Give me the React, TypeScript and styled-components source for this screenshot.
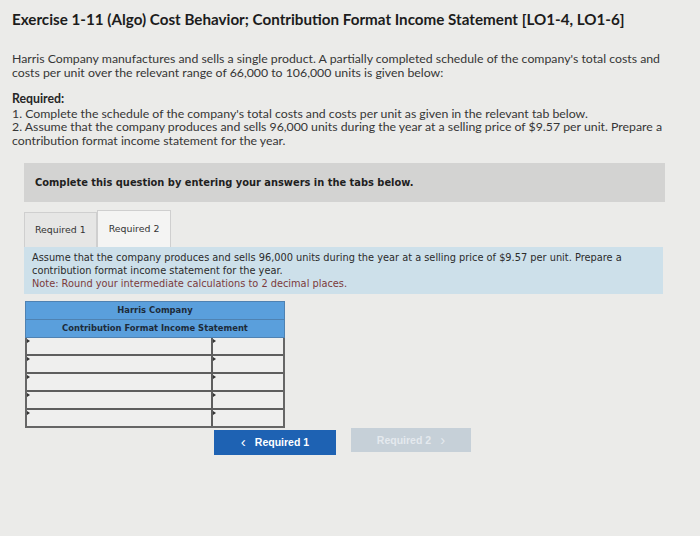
import styled, { createGlobalStyle } from 'styled-components'

const Global = createGlobalStyle`
  html, body {
    margin: 0;
    padding: 0;
    background: #ebebe9;
  }
`

const rows = [0, 1, 2, 3, 4]

const App = () => {
  return (
    <>
      <Global />
      <S.Page>
        <S.Title>
          Exercise 1-11 (Algo) Cost Behavior; Contribution Format Income Statement [LO1-4, LO1-6]
        </S.Title>

        <S.Para>
          Harris Company manufactures and sells a single product. A partially completed schedule of the company's total costs and
          costs per unit over the relevant range of 66,000 to 106,000 units is given below:
        </S.Para>

        <S.Para>
          <S.Strong>Required:</S.Strong>
          1. Complete the schedule of the company's total costs and costs per unit as given in the relevant tab below.
          <br />
          2. Assume that the company produces and sells 96,000 units during the year at a selling price of $9.57 per unit. Prepare a
          contribution format income statement for the year.
        </S.Para>

        <S.Work>
          <S.Banner>Complete this question by entering your answers in the tabs below.</S.Banner>

          <S.Tabs>
            <S.Tab>Required 1</S.Tab>
            <S.Tab $active>Required 2</S.Tab>
          </S.Tabs>

          <S.Info>
            Assume that the company produces and sells 96,000 units during the year at a selling price of $9.57 per unit. Prepare a
            contribution format income statement for the year.
            <S.Note>Note: Round your intermediate calculations to 2 decimal places.</S.Note>
          </S.Info>

          <S.Sheet>
            <S.Head>Harris Company</S.Head>
            <S.Head>Contribution Format Income Statement</S.Head>
            <S.Grid>
              {rows.map(r => (
                <S.Row key={r}>
                  <S.Cell />
                  <S.Cell />
                </S.Row>
              ))}
            </S.Grid>
          </S.Sheet>

          <S.Nav>
            <S.NavButton>
              <S.Chevron>&lsaquo;</S.Chevron> Required 1
            </S.NavButton>
            <S.NavButton $disabled>
              Required 2 <S.Chevron>&rsaquo;</S.Chevron>
            </S.NavButton>
          </S.Nav>
        </S.Work>
      </S.Page>
    </>
  )
}

export default App

const S = {
  Page: styled.div`
    width: 700px;
    height: 536px;
    box-sizing: border-box;
    padding: 10px 12px 0 12px;
    font-family: Lato, 'Open Sans', sans-serif;
    color: #2a2a2a;
    overflow: hidden;
  `,

  Title: styled.h1`
    margin: 0;
    font-size: 15.2px;
    font-weight: 700;
    line-height: 18px;
    color: #1c1c1c;
  `,

  Para: styled.p`
    margin: 24px 0 0 0;
    font-size: 12.3px;
    line-height: 13.6px;
    color: #363636;

    & + & {
      margin-top: 13px;
    }
  `,

  Strong: styled.span`
    display: block;
    margin-bottom: 1px;
    font-weight: 700;
    color: #262626;
  `,

  Work: styled.div`
    margin: 15px 0 0 12px;
    width: 641px;
    font-family: 'DejaVu Sans', Verdana, sans-serif;
  `,

  Banner: styled.div`
    height: 39px;
    display: flex;
    align-items: center;
    padding-left: 11px;
    background: #d3d3d2;
    font-size: 9.9px;
    font-weight: 700;
    color: #1f1f1f;
  `,

  Tabs: styled.div`
    display: flex;
    margin-top: 8px;
    align-items: flex-end;
  `,

  Tab: styled.div<{ $active?: boolean }>`
    box-sizing: border-box;
    height: ${p => (p.$active ? 37 : 35)}px;
    padding: 0 ${p => (p.$active ? 11 : 10)}px;
    display: flex;
    align-items: center;
    border: 1px solid #cfcfcf;
    border-bottom: none;
    background: ${p => (p.$active ? '#f4f4f3' : '#e6e6e5')};
    font-size: 9.4px;
    color: #333;
  `,

  Info: styled.div`
    width: 639px;
    box-sizing: border-box;
    padding: 4px 8px 4px 8px;
    background: #cde0ea;
    font-size: 9.8px;
    line-height: 13px;
    color: #2b2b2b;
  `,

  Note: styled.div`
    color: #7b3a3a;
  `,

  Sheet: styled.div`
    margin-top: 7px;
    margin-left: 1px;
    width: 260px;
  `,

  Head: styled.div`
    height: 17px;
    display: flex;
    align-items: center;
    justify-content: center;
    background: #5a9fdc;
    border: 1px solid #4f82b2;
    border-top: none;
    font-size: 8.4px;
    font-weight: 700;
    color: #1d2b3a;

    &:first-child {
      border-top: 1px solid #4f82b2;
    }
  `,

  Grid: styled.div`
    border: 2px solid #666;
    border-top: none;
    background: #efefee;
  `,

  Row: styled.div`
    display: grid;
    grid-template-columns: 184px 1fr;
    height: 16px;
    border-top: 2px solid #5e5e5e;

    &:first-child {
      border-top: none;
    }
  `,

  Cell: styled.div`
    position: relative;

    & + & {
      border-left: 2px solid #5e5e5e;
    }

    &::before {
      content: '';
      position: absolute;
      left: 0;
      top: 1px;
      border-left: 3px solid #333;
      border-top: 2px solid transparent;
      border-bottom: 2px solid transparent;
    }
  `,

  Nav: styled.div`
    display: flex;
    gap: 15px;
    margin: 0 0 0 190px;
    align-items: flex-start;
  `,

  NavButton: styled.div<{ $disabled?: boolean }>`
    box-sizing: border-box;
    width: ${p => (p.$disabled ? 120 : 122)}px;
    height: ${p => (p.$disabled ? 24 : 25)}px;
    margin-top: ${p => (p.$disabled ? 0 : 2)}px;
    display: flex;
    align-items: center;
    justify-content: center;
    gap: 9px;
    background: ${p => (p.$disabled ? '#c6d0d8' : '#1e62b3')};
    color: ${p => (p.$disabled ? '#e4e9ee' : '#ffffff')};
    font-family: 'Liberation Sans', Arial, sans-serif;
    font-size: 10.5px;
    font-weight: 700;
  `,

  Chevron: styled.span`
    font-size: 15px;
    font-weight: 400;
    line-height: 10px;
  `,
}
